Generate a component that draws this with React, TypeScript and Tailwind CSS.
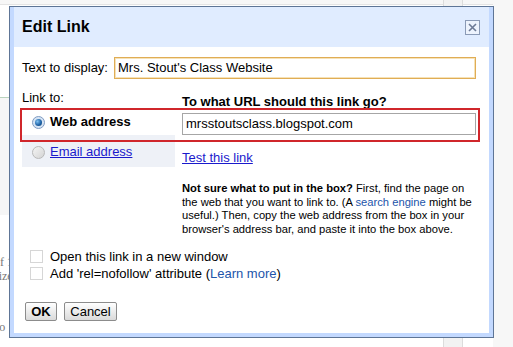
import React from "react"

function Radio({ checked }: { checked: boolean }) {
  if (checked) {
    return (
      <span className="flex h-[13px] w-[13px] items-center justify-center rounded-full border border-[#7f9bc2] bg-[#d6e4f4]">
        <span className="h-[7px] w-[7px] rounded-full bg-[radial-gradient(circle_at_35%_35%,#7fc0f0_0%,#1f64a8_55%,#0b3a6e_100%)]" />
      </span>
    )
  }
  return <span className="h-[13px] w-[13px] rounded-full border border-[#b9b9b9] bg-[linear-gradient(135deg,#f4f4f4,#d4d4d4)]" />
}

function Checkbox() {
  return <span className="h-[13px] w-[13px] border border-[#d6d6d6] bg-white" />
}

export default function App() {
  return (
    <div className="relative h-[347px] w-[513px] overflow-hidden bg-white font-['Liberation_Sans',Arial,sans-serif] text-[13px] text-black">
      {/* page behind the dialog */}
      <div className="h-[5px] border-b border-[#e4e4e4] bg-[#f7f7f7]" />
      <div className="absolute left-0 top-[97px] h-[118px] w-[40px] border-t border-[#b9d3bd] bg-[#f6f6f6]" />
      <div className="absolute left-[443px] top-0 h-[347px] w-[20px] border-x border-[#dcdcdc] bg-[#f2f2f2]" />
      <div className="absolute right-0 top-0 h-[347px] w-[20px] bg-[#f7f7f7]" />
      <div className="absolute left-[-6px] top-[255px] font-['Liberation_Serif',serif] text-[12px] leading-[14px] text-[#777]">
        of 1<br />size
      </div>
      <div className="absolute left-[-4px] top-[318px] font-['Liberation_Serif',serif] text-[12px] text-[#777]">to</div>

      {/* dialog */}
      <div className="absolute left-[9px] top-[6px] flex h-[332px] w-[485px] flex-col border border-[#5e7596] bg-[#c3d9ff] px-[4px] pb-[4px]">
        <div className="flex h-[40px] items-center justify-between bg-[#e0ecff] pl-[8px] pr-[9px]">
          <span className="text-[16px] font-bold">Edit Link</span>
          <span className="flex h-[15px] w-[15px] items-center justify-center border border-[#8a9ab6] bg-[#edf3fd]">
            <svg width="9" height="9" viewBox="0 0 9 9">
              <path d="M1 1L8 8M8 1L1 8" stroke="#6c7a96" strokeWidth="1.6" />
            </svg>
          </span>
        </div>

        <div className="relative flex-1 bg-white pl-[8px] pt-[10px]">
          <div className="flex items-center gap-[6px]">
            <span>Text to display:</span>
            <div className="flex h-[22px] w-[362px] items-center border border-[#e0ad55] pl-[3px] shadow-[inset_0_0_0_1px_#f6e2b8]">
              Mrs. Stout's Class Website
            </div>
          </div>

          <div className="mt-[10px] flex">
            <div className="w-[153px]">
              <div className="h-[18px] leading-[18px]">Link to:</div>
              <div className="mt-[2px] flex h-[26px] items-center gap-[5px] bg-white pl-[10px]">
                <Radio checked />
                <span className="font-bold">Web address</span>
              </div>
              <div className="h-[5px] bg-[#eef1f7]" />
              <div className="flex h-[27px] items-center gap-[5px] bg-[#eef1f7] pb-[3px] pl-[10px]">
                <Radio checked={false} />
                <span className="text-[#1a1acc] underline">Email address</span>
              </div>
            </div>

            <div className="ml-[7px] flex flex-col">
              <div className="mt-[5px] h-[16px] leading-[16px] font-bold">To what URL should this link go?</div>
              <div className="mt-[3px] flex h-[22px] w-[294px] items-center border border-[#a6a6a6] pl-[3px]">
                mrsstoutsclass.blogspot.com
              </div>
              <div className="mt-[15px] h-[16px] leading-[16px] text-[#1a1acc] underline">Test this link</div>
              <p className="mt-[16px] whitespace-nowrap text-[11.2px] leading-[13.5px]">
                <b>Not sure what to put in the box?</b> First, find the page on
                <br />
                the web that you want to link to. (A <span className="text-[#2255aa]">search engine</span> might be
                <br />
                useful.) Then, copy the web address from the box in your
                <br />
                browser's address bar, and paste it into the box above.
              </p>
            </div>
          </div>

          <div className="mt-[12px] flex flex-col pl-[8px]">
            <label className="flex h-[17px] items-center gap-[7px]">
              <Checkbox />
              <span>Open this link in a new window</span>
            </label>
            <label className="flex h-[17px] items-center gap-[7px]">
              <Checkbox />
              <span>
                Add 'rel=nofollow' attribute (<span className="text-[#2255aa]">Learn more</span>)
              </span>
            </label>
          </div>

          <div className="ml-[3px] mt-[20px] flex gap-[7px]">
            <button className="h-[19px] w-[32px] rounded-[2px] border border-[#8c8c8c] bg-[linear-gradient(#ffffff,#dadada)] text-[13px] font-bold leading-[17px]">
              OK
            </button>
            <button className="h-[19px] w-[53px] rounded-[2px] border border-[#8c8c8c] bg-[linear-gradient(#ffffff,#dadada)] text-[13px] leading-[17px]">
              Cancel
            </button>
          </div>

          {/* red annotation box */}
          <div className="pointer-events-none absolute left-[6px] top-[61px] h-[34px] w-[460px] border-2 border-[#d0262b]" />
        </div>
      </div>
    </div>
  )
}
